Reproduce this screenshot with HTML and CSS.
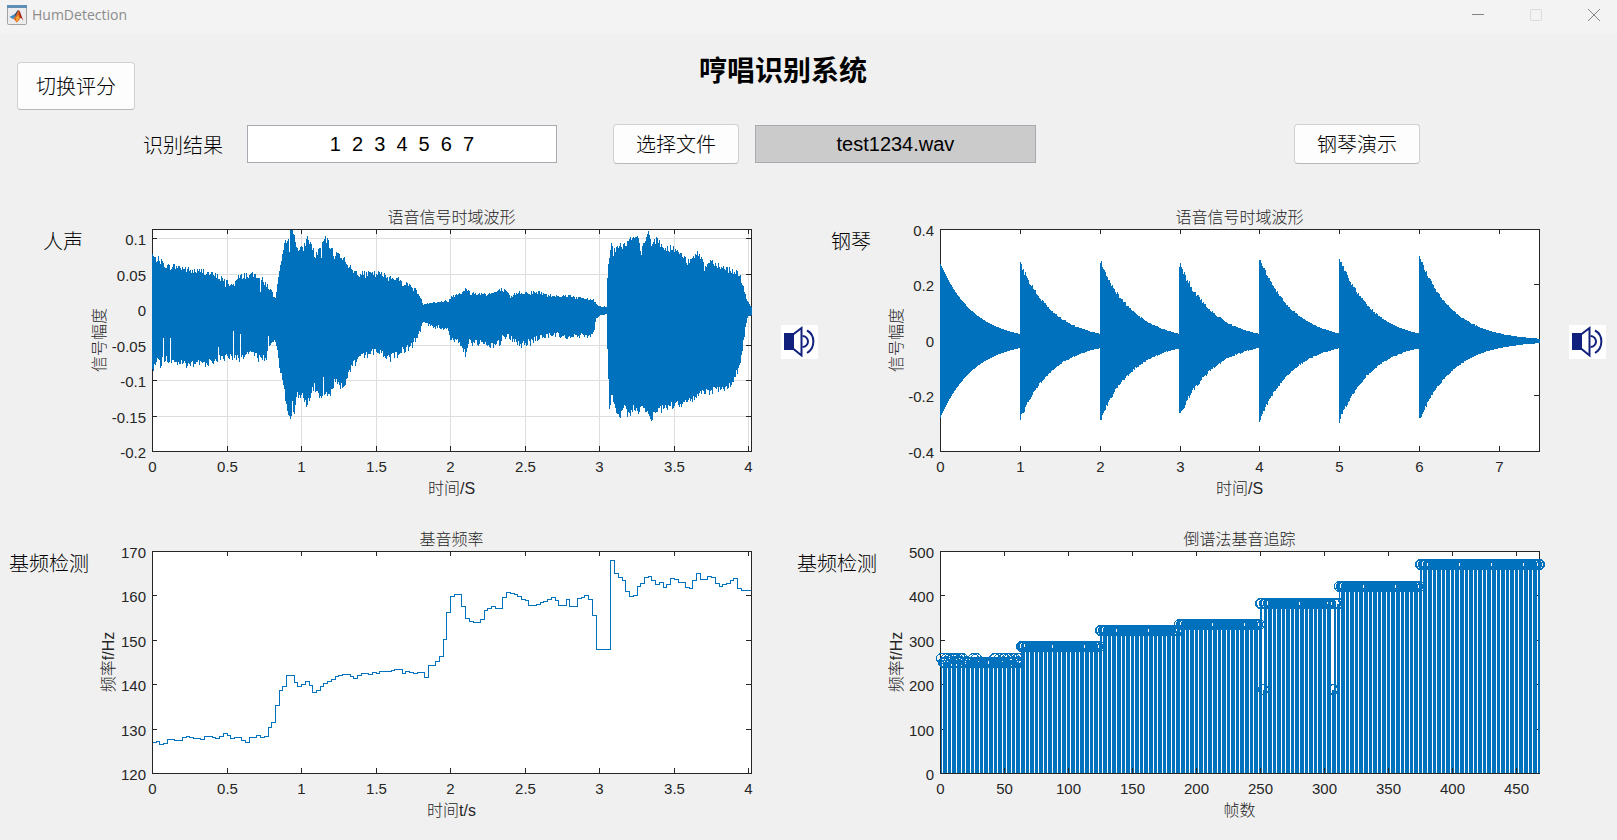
FILE: index.html
```html
<!DOCTYPE html>
<html lang="zh-CN">
  <head>
    <meta charset="UTF-8" />
    <title>HumDetection</title>
    <link rel="stylesheet" href="styles.css">
  </head>
  <body>
    <header class="titlebar">
      <svg class="app-icon" viewBox="0 0 20 20" aria-hidden="true">
        <rect x="0.5" y="0.5" width="19" height="19" rx="1" fill="#ececee" stroke="#a3a3a5" />
        <rect x="0" y="0" width="20" height="3" fill="#5f8fb4" />
        <path d="M2.5 12 L7 9.5 L9 11.5 L6 14 Z" fill="#3c86b8" />
        <path d="M7 9.5 C9 9 9.5 5.5 11.5 5 L10 12 L9 11.5 Z" fill="#27466f" />
        <path d="M11.5 5 C9.5 8 9 12 6 14 C8 14 8.5 16.5 9.5 17.5 C11.5 17 12.5 13.5 14 12.5 Z" fill="#e0661f" />
        <path d="M9 13 L11 10 L12.5 13 L9.5 17.5 Z" fill="#f6a83a" />
        <path d="M11.5 5 C13.5 6 14.5 12 16.5 15.5 C15 14 14.5 12.5 13 13 Z" fill="#a42a14" />
      </svg>
      <span class="app-name">HumDetection</span>
      <div class="window-buttons">
        <button class="window-button" aria-label="最小化">
          <svg viewBox="0 0 12 12"><path d="M0 5.5H12" /></svg>
        </button>
        <button class="window-button" aria-label="最大化" disabled>
          <svg viewBox="0 0 12 12"><rect x="0.5" y="0.5" width="11" height="11" rx="1" /></svg>
        </button>
        <button class="window-button" aria-label="关闭">
          <svg viewBox="0 0 12 12"><path d="M0 0L12 12M12 0L0 12" /></svg>
        </button>
      </div>
    </header>

    <div class="top">
      <button class="btn btn-switch">切换评分</button>
      <h1>哼唱识别系统</h1>
    </div>

    <div class="controls">
      <label for="result">识别结果</label>
      <input id="result" class="field field-result" type="text" value="1  2  3  4  5  6  7" readonly>
      <button class="btn btn-file">选择文件</button>
      <input class="field field-file" type="text" value="test1234.wav" aria-label="文件名" readonly>
      <button class="btn btn-piano">钢琴演示</button>
    </div>

    <main class="plots">
      <h2 class="name">人声</h2>
      <svg class="axes" id="voice" role="img" aria-label="人声 语音信号时域波形"></svg>
      <button class="speaker" aria-label="播放人声">
        <svg viewBox="0 0 37 34">
          <rect x="4" y="9" width="8" height="15" fill="#10207c" />
          <path d="M12 9.5L20.500 3V30.500L12 23.500Z" />
          <path d="M21.500 11a5.500 5.500 0 0 1 0 11M26 5.500C34.500 10 34.500 23 26 28" />
        </svg>
      </button>
      <h2 class="name">钢琴</h2>
      <svg class="axes" id="piano" role="img" aria-label="钢琴 语音信号时域波形"></svg>
      <button class="speaker" aria-label="播放钢琴">
        <svg viewBox="0 0 37 34">
          <rect x="4" y="9" width="8" height="15" fill="#10207c" />
          <path d="M12 9.5L20.500 3V30.500L12 23.500Z" />
          <path d="M21.500 11a5.500 5.500 0 0 1 0 11M26 5.500C34.500 10 34.500 23 26 28" />
        </svg>
      </button>

      <h2 class="name name-pitch">基频检测</h2>
      <svg class="axes" id="pitch" role="img" aria-label="基音频率"></svg>
      <h2 class="name name-pitch name-wide">基频检测</h2>
      <svg class="axes" id="cepstrum" role="img" aria-label="倒谱法基音追踪"></svg>
    </main>

    <script src="plots.js"></script>
  </body>
</html>
```
FILE: styles.css
```css
* {
  box-sizing: border-box;
}
body {
  margin: 0;
  min-height: 100vh;
  display: flex;
  flex-direction: column;
  background-color: #f0f0f0;
  color: #000;
  font-family: "Liberation Sans", "Noto Sans CJK SC", sans-serif;
  font-size: 20px;
  font-weight: 300;
}
button,
input {
  font-family: inherit;
  font-size: 20px;
  font-weight: 300;
  color: inherit;
}
h1,
h2 {
  margin: 0;
}

.titlebar {
  display: flex;
  align-items: center;
  height: 34px;
  padding-left: 7px;
  background-color: #f3f3f3;
}
.app-icon {
  width: 20px;
  height: 20px;
  margin-bottom: 4px;
}
.app-name {
  margin-left: 5px;
  margin-bottom: 4px;
  font-family: "Open Sans", sans-serif;
  font-size: 14px;
  font-weight: 400;
  line-height: 20px;
  color: #8c8c8c;
}
.window-buttons {
  display: flex;
  gap: 12px;
  margin-left: auto;
}
.window-button {
  display: flex;
  align-items: center;
  justify-content: center;
  width: 46px;
  height: 30px;
  margin-bottom: 4px;
  padding: 0;
  border: none;
  background: none;
}
.window-button svg {
  width: 12px;
  height: 12px;
  fill: none;
  stroke: #858585;
}
.window-button:disabled svg {
  stroke: #dcdcdc;
}

.top {
  display: flex;
  padding: 18px 186px 0 17px;
}
h1 {
  flex: 1;
  text-align: center;
  font-size: 28px;
  line-height: 40px;
  font-weight: 700;
}
.btn {
  width: 126px;
  height: 40px;
  padding: 0 0 2px;
  border: 1px solid #d0d0d0;
  border-bottom-color: #b9b9b9;
  border-radius: 4px;
  background-color: #fdfdfd;
}
.btn-switch {
  width: 118px;
  height: 48px;
  margin-top: 10px;
}

.controls {
  display: flex;
  align-items: center;
  margin-top: 14px;
  padding: 0 197px 0 143px;
}
.field {
  height: 38px;
  min-width: 0;
  padding: 0;
  border: 1px solid #a9a9b1;
  border-radius: 0;
  background-color: #fff;
  text-align: center;
}
.field-result {
  flex: 310 1 0;
  margin-left: 24px;
}
.btn-file {
  margin: 0 16px 0 56px;
}
.field-file {
  flex: 281 1 0;
  background-color: #cbcbcb;
}
.btn-piano {
  margin-left: 258px;
}

.plots {
  flex: 1;
  display: grid;
  grid-template-columns: 89px 1fr 61px 55px 1fr 68px;
  grid-template-rows: 1fr 1fr;
  row-gap: 7px;
  padding: 36px 0 3px;
}
.name {
  padding: 30px 6px 0 0;
  text-align: right;
  font-size: 20px;
  line-height: 24px;
  font-weight: 300;
}
.name-pitch {
  padding-right: 0;
}
.name-wide {
  grid-column: 3 / 5;
}
.speaker {
  width: 37px;
  height: 34px;
  margin: 125px 0 0 20px;
  padding: 0;
  border: none;
  background-color: #fff;
}
.speaker svg {
  display: block;
  width: 37px;
  height: 34px;
  fill: none;
  stroke: #10207c;
  stroke-width: 2;
}

.axes {
  display: block;
  width: 100%;
  height: 100%;
  min-height: 260px;
  overflow: visible;
}
.axes text {
  font-size: 15px;
  fill: #262626;
}
.axes .axis-label {
  font-size: 16px;
}
.axes .area {
  fill: #fff;
}
.axes path {
  fill: none;
  stroke: #262626;
  shape-rendering: crispEdges;
}
.axes .grid {
  stroke: #dedede;
}
.axes .data,
.axes circle {
  fill: none;
  stroke: #0072bd;
  shape-rendering: crispEdges;
}
```
FILE: plots.js
```js
const MARGIN = { left: 63, right: 10, top: 29, bottom: 64 };
const NS = "http://www.w3.org/2000/svg";

// voice envelope: [time in 1/149 s, level in 1/707]
const voiceTop = [
  [0,54],[3,50],[6,50],[11,45],[17,42],[21,43],[31,41],[39,38],[51,38],[61,34],[71,30],[80,24],
  [86,31],[91,34],[106,34],[111,27],[116,23],[123,11],[126,29],[130,54],[133,67],[136,73],[138,79],
  [142,74],[146,58],[151,61],[155,71],[159,64],[163,52],[167,61],[173,71],[178,62],[182,53],[186,56],
  [193,49],[199,39],[208,35],[228,35],[236,32],[244,31],[251,26],[258,24],[266,16],[271,6],[278,7],
  [296,9],[300,14],[308,17],[313,20],[318,16],[338,16],[346,18],[351,20],[355,16],[358,12],[365,17],
  [388,17],[396,14],[418,14],[425,12],[441,10],[446,4],[454,3],[455,29],[456,48],[459,66],[461,56],
  [468,67],[471,62],[478,70],[486,70],[489,57],[492,67],[496,76],[499,66],[505,69],[511,61],[523,60],
  [531,51],[535,47],[543,56],[549,52],[552,41],[558,49],[568,43],[583,37],[587,36],[591,21],[594,10],
  [598,4],[600,3]
];
const voiceBottom = [
  [0,60],[4,48],[8,56],[11,48],[19,51],[24,52],[34,55],[51,53],[64,49],[78,46],[88,49],[96,43],
  [106,48],[114,48],[118,34],[123,28],[125,41],[130,73],[133,88],[136,106],[139,107],[142,103],
  [145,83],[149,84],[154,94],[158,88],[162,74],[164,84],[173,84],[179,81],[183,70],[188,77],[193,71],
  [201,54],[211,46],[223,40],[238,48],[246,43],[258,36],[266,26],[271,11],[278,16],[295,19],[298,27],
  [306,33],[314,44],[316,33],[325,33],[336,36],[348,33],[351,26],[356,26],[368,35],[378,32],[388,26],
  [401,25],[418,26],[441,24],[444,8],[448,5],[454,4],[457,99],[459,84],[463,99],[467,109],[472,98],
  [476,104],[481,97],[486,100],[490,94],[498,108],[506,100],[518,95],[531,94],[541,88],[547,83],
  [555,81],[568,79],[576,76],[581,68],[586,59],[590,41],[593,18],[595,8],[600,4]
];
// single columns where the wave does not reach its envelope
const topGaps = { 73: 23, 108: 18, 137: 58, 169: 52 };
const bottomGaps = { 11: 28, 18: 28, 66: 37, 81: 21, 88: 24, 116: 26, 140: 91, 171: 67 };

// pitch of each 25 ms frame, in steps of 0.225 Hz above 120 Hz
const pitchFrames = [
  31,32,29,30,34,34,33,33,36,37,36,35,35,34,37,37,36,35,37,40,38,35,36,36,33,31,36,36,38,36,
  37,46,51,68,83,87,98,98,91,87,89,92,88,81,83,87,90,92,94,97,98,99,99,97,95,98,100,100,99,101,
  100,102,102,102,103,104,104,100,102,101,100,101,101,96,108,108,112,117,134,161,177,179,179,167,
  155,152,151,151,154,163,165,167,165,165,176,181,180,179,177,174,173,168,168,169,171,172,174,176,
  173,168,168,174,167,167,175,176,178,174,158,124,124,124,124,213,200,196,193,182,177,178,187,190,
  196,197,193,189,191,186,189,195,194,191,191,186,185,193,200,194,194,197,196,190,187,189,190,193,
  195,185,183,183,183
];

const highFrames = [1, 5, 7, 9, 10, 12, 13, 16, 17, 26, 28, 42, 43, 46, 49, 50, 52, 54, 56, 58, 61];
const lowFrames = [252, 306, 307];

function add(parent, name, attrs, text) {
  const el = document.createElementNS(NS, name);
  for (const key in attrs) el.setAttribute(key, attrs[key]);
  if (text !== undefined) el.textContent = text;
  parent.appendChild(el);
  return el;
}

function randomizer(seed) {
  return () => {
    seed = (seed * 1103515245 + 12345) % 2147483648;
    return seed / 2147483648;
  };
}

function lookup(points, x) {
  let i = 1;
  while (i < points.length - 1 && points[i][0] < x) i++;
  const [x0, y0] = points[i - 1];
  const [x1, y1] = points[i];
  return y0 + ((y1 - y0) * (x - x0)) / (x1 - x0);
}

function drawAxes(id, opt) {
  const svg = document.getElementById(id);
  const box = svg.getBoundingClientRect();
  svg.replaceChildren();
  const left = MARGIN.left;
  const top = MARGIN.top;
  const right = Math.round(box.width) - MARGIN.right;
  const bottom = Math.round(box.height) - MARGIN.bottom;
  const middle = (left + right) / 2;
  const px = (v) => left + Math.round((v / opt.xMax) * (right - left)) + 0.5;
  const py = (v) => bottom - Math.round(((v - opt.yMin) / (opt.yMax - opt.yMin)) * (bottom - top)) + 0.5;

  add(svg, "rect", { class: "area", x: left, y: top, width: right - left, height: bottom - top });
  let grid = "";
  let xTicks = "";
  let yTicks = "";
  for (const v of opt.xTicks) {
    const x = px(v);
    grid += `M${x} ${top}V${bottom}`;
    xTicks += `M${x} ${top}v5M${x} ${bottom}v-5`;
    add(svg, "text", { x: x, y: bottom + 21, "text-anchor": "middle" }, v);
  }
  for (const v of opt.yTicks) {
    const y = py(v);
    grid += `M${left} ${y}H${right}`;
    yTicks += `M${left} ${y}h5M${right} ${y}h-5`;
    add(svg, "text", { x: left - 6, y: y + 6, "text-anchor": "end" }, v);
  }
  if (opt.grid) add(svg, "path", { class: "grid", d: grid });
  add(svg, "path", { d: yTicks });
  add(svg, "path", { d: `M${left + 0.5} ${bottom + 0.5}V${top + 0.5}H${right + 0.5}V${bottom + 0.5}Z` });

  opt.draw({ svg, px, py, left, right });

  add(svg, "path", { d: xTicks + `M${left} ${bottom + 0.5}H${right + 1}` });
  add(svg, "text", { class: "axis-label", x: middle, y: top - 6, "text-anchor": "middle" }, opt.title);
  add(svg, "text", { class: "axis-label", x: middle, y: bottom + 43, "text-anchor": "middle" }, opt.xLabel);
  add(svg, "text", {
    class: "axis-label",
    transform: `translate(${opt.yLabelX} ${(top + bottom) / 2}) rotate(-90)`,
    "text-anchor": "middle"
  }, opt.yLabel);
}

function drawVoice({ svg, py, left, right }) {
  const random = randomizer(7);
  let d = "";
  for (let x = left; x <= right; x++) {
    const t = ((x - left) / (right - left)) * 599;
    const column = Math.round(t);
    let up = lookup(voiceTop, t);
    let down = lookup(voiceBottom, t);
    up += (random() - 0.4) * Math.min(7, up / 4);
    down += (random() - 0.5) * Math.min(8, down / 4);
    if (column in topGaps) up = topGaps[column];
    if (column in bottomGaps) down = bottomGaps[column];
    d += `M${x + 0.5} ${py(Math.min(up / 707, 0.1128))}V${py(-down / 707) + 0.5}`;
  }
  add(svg, "path", { class: "data", d: d });
}

function drawPiano({ svg, py, left, right }) {
  const ups = [0.279, 0.29, 0.298, 0.288, 0.304, 0.304, 0.31];
  const downs = [0.276, 0.288, 0.295, 0.278, 0.292, 0.292, 0.292];
  const noise = [0, 0.07, 0.07, 0.09, 0.05, 0.06, 0.05];
  const random = randomizer(21);
  let d = "";
  for (let x = left; x <= right; x++) {
    const t = ((x - left) / (right - left)) * 7.5;
    const note = Math.min(6, Math.floor(t + 0.009));
    const decay = Math.exp(-2.4 * (t - note));
    const up = ups[note] * decay * (1 - random() * noise[note]);
    const down = downs[note] * decay * (1 - random() * noise[note]);
    d += `M${x + 0.5} ${py(up)}V${py(-down) + 0.5}`;
  }
  add(svg, "path", { class: "data", d: d });
}

function drawPitch({ svg, px, py, right }) {
  let d = "";
  pitchFrames.forEach((step, i) => {
    const x = px(i * 0.025);
    const y = py(120 + step * 0.2252);
    d += i === 0 ? `M${x} ${y}` : `H${x}V${y}`;
  });
  add(svg, "path", { class: "data", d: d + `H${right}` });
}

function cepstrumValue(frame) {
  if (lowFrames.includes(frame)) return 190;
  if (highFrames.includes(frame)) return 259;
  if (frame < 63) return 250;
  if (frame < 125) return 286;
  if (frame < 187) return 322;
  if (frame < 250) return 335;
  if (frame < 312) return 382;
  if (frame < 375) return 421;
  return 470;
}

function drawCepstrum({ svg, px, py }) {
  let d = "";
  for (let frame = 1; frame <= 468; frame++) {
    const x = px(frame);
    const y = py(cepstrumValue(frame));
    d += `M${x} ${py(0)}V${y}`;
    add(svg, "circle", { cx: x, cy: y, r: 5 });
  }
  add(svg, "path", { class: "data", d: d });
}

function drawAll() {
  const seconds = [0, 0.5, 1, 1.5, 2, 2.5, 3, 3.5, 4];
  drawAxes("voice", {
    title: "语音信号时域波形", xLabel: "时间/S", yLabel: "信号幅度", yLabelX: 16,
    xMax: 4.018, yMin: -0.2, yMax: 0.1128, grid: true,
    xTicks: seconds, yTicks: [-0.2, -0.15, -0.1, -0.05, 0, 0.05, 0.1], draw: drawVoice
  });
  drawAxes("piano", {
    title: "语音信号时域波形", xLabel: "时间/S", yLabel: "信号幅度", yLabelX: 25,
    xMax: 7.5, yMin: -0.4, yMax: 0.4,
    xTicks: [0, 1, 2, 3, 4, 5, 6, 7], yTicks: [-0.4, -0.2, 0, 0.2, 0.4], draw: drawPiano
  });
  drawAxes("pitch", {
    title: "基音频率", xLabel: "时间t/s", yLabel: "频率f/Hz", yLabelX: 25,
    xMax: 4.018, yMin: 120, yMax: 170,
    xTicks: seconds, yTicks: [120, 130, 140, 150, 160, 170], draw: drawPitch
  });
  drawAxes("cepstrum", {
    title: "倒谱法基音追踪", xLabel: "帧数", yLabel: "频率f/Hz", yLabelX: 25,
    xMax: 468, yMin: 0, yMax: 500,
    xTicks: [0, 50, 100, 150, 200, 250, 300, 350, 400, 450],
    yTicks: [0, 100, 200, 300, 400, 500], draw: drawCepstrum
  });
}

drawAll();
window.addEventListener("resize", drawAll);
```
